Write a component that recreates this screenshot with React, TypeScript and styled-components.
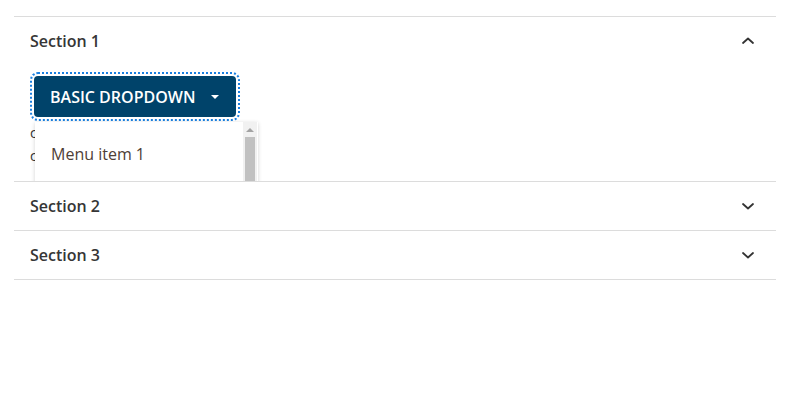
import { useState } from "react";
import styled, { createGlobalStyle } from "styled-components";

const GlobalStyle = createGlobalStyle`
  html, body {
    margin: 0;
    padding: 0;
    background: #ffffff;
    font-family: "Open Sans", "Liberation Sans", sans-serif;
    color: #333333;
  }
`;

const Page = styled.div`
  padding: 16px 15px 0 14px;
`;

const Accordion = styled.div`
  border-top: 1px solid #dcdcdc;
`;

const Item = styled.section`
  border-bottom: 1px solid #dcdcdc;
`;

const Header = styled.button`
  display: flex;
  align-items: center;
  justify-content: space-between;
  width: 100%;
  height: 48px;
  padding: 0 20px 0 16px;
  border: 0;
  background: transparent;
  font-family: inherit;
  font-size: 16px;
  font-weight: 600;
  color: #363636;
  cursor: pointer;
  text-align: left;
`;

const Panel = styled.div`
  position: relative;
  overflow: hidden;
  padding: 11px 16px 14px;
`;

const DropdownButton = styled.button`
  display: inline-flex;
  align-items: center;
  gap: 16px;
  height: 41px;
  margin-left: 4px;
  padding: 0 17px 0 16px;
  border: 0;
  border-radius: 4px;
  background: #00436a;
  color: #ffffff;
  font-family: inherit;
  font-size: 16px;
  font-weight: 600;
  outline: 2px dotted #1a80e0;
  outline-offset: 2px;
  cursor: pointer;
`;

const Caret = styled.span`
  width: 0;
  height: 0;
  border-left: 4px solid transparent;
  border-right: 4px solid transparent;
  border-top: 4px solid #ffffff;
`;

const Text = styled.p`
  margin: 4px 0 0;
  font-size: 14px;
  line-height: 23px;
  color: #333333;
`;

const Menu = styled.div`
  position: absolute;
  top: 57px;
  left: 21px;
  width: 223px;
  height: 250px;
  display: flex;
  background: #ffffff;
  box-shadow: 0 1px 4px rgba(0, 0, 0, 0.18);
`;

const MenuList = styled.ul`
  flex: 1;
  margin: 0;
  padding: 8px 0;
  list-style: none;
  overflow: hidden;
`;

const MenuItem = styled.li`
  height: 48px;
  padding: 0 16px;
  display: flex;
  align-items: center;
  font-size: 16px;
  color: #4e4036;
`;

const Scrollbar = styled.div`
  display: flex;
  flex-direction: column;
  width: 14px;
  margin-right: 1px;
  background: #f1f1f1;
`;

const ScrollArrow = styled.div`
  display: flex;
  align-items: center;
  justify-content: center;
  height: 15px;

  &::before {
    content: "";
    border-left: 4px solid transparent;
    border-right: 4px solid transparent;
    border-bottom: 4px solid #a3a3a3;
  }
`;

const ScrollThumb = styled.div`
  height: 200px;
  margin: 0 2px;
  background: #c1c1c1;
`;

const Chevron = ({ up }: { up: boolean }) => (
  <svg width="16" height="16" viewBox="0 0 16 16" fill="none">
    <polyline
      points={up ? "3,10 8,5.5 13,10" : "3,6 8,10.5 13,6"}
      stroke="#333333"
      strokeWidth="1.8"
      strokeLinecap="round"
      strokeLinejoin="round"
    />
  </svg>
);

const sections = ["Section 1", "Section 2", "Section 3"];
const menuItems = ["Menu item 1", "Menu item 2", "Menu item 3", "Menu item 4", "Menu item 5"];

export default function App() {
  const [open, setOpen] = useState(0);

  return (
    <Page>
      <GlobalStyle />
      <Accordion>
        {sections.map((title, i) => (
          <Item key={title}>
            <Header onClick={() => setOpen(open === i ? -1 : i)}>
              {title}
              <Chevron up={open === i} />
            </Header>
            {open === i && (
              <Panel>
                <DropdownButton>
                  BASIC DROPDOWN
                  <Caret />
                </DropdownButton>
                <Text>
                  content of the first section
                  <br />
                  content continues here
                </Text>
                <Menu>
                  <MenuList>
                    {menuItems.map((m) => (
                      <MenuItem key={m}>{m}</MenuItem>
                    ))}
                  </MenuList>
                  <Scrollbar>
                    <ScrollArrow />
                    <ScrollThumb />
                  </Scrollbar>
                </Menu>
              </Panel>
            )}
          </Item>
        ))}
      </Accordion>
    </Page>
  );
}
